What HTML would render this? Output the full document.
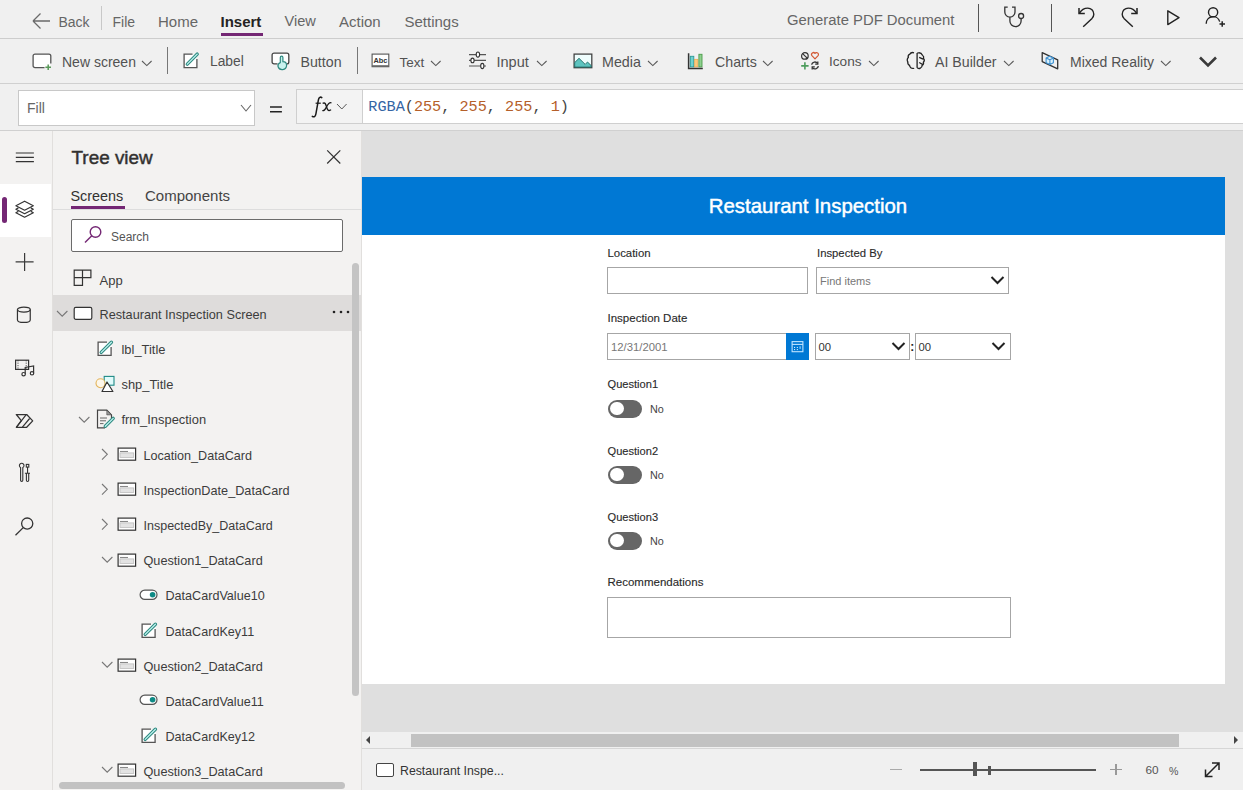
<!DOCTYPE html>
<html><head><meta charset="utf-8"><title>Power Apps</title>
<style>
html,body{margin:0;padding:0;width:1243px;height:792px;overflow:hidden;background:#f0f0f0;}
.t{position:absolute;white-space:pre;line-height:1;font-family:"Liberation Sans",sans-serif;}
.r{position:absolute;}
svg.r{overflow:visible;}
</style></head><body>
<div class="r" style="left:0px;top:0px;width:1243px;height:792px;background:#f0f0f0;"></div>
<div class="r" style="left:0px;top:38px;width:1243px;height:1px;background:#cdcdcd;"></div>
<svg class="r" style="left:30px;top:10px;" width="22" height="22" viewBox="0 0 22 22" fill="none"><path d="M3 11 H20 M3 11 L10.5 3.5 M3 11 L10.5 18.5" stroke="#6a6a6a" stroke-width="1.3"/></svg>
<div class="t" style="left:58.50px;top:14.65px;font-size:14px;color:#666;font-weight:400;font-family:'Liberation Sans', sans-serif;">Back</div>
<div class="r" style="left:101px;top:6px;width:1px;height:24px;background:#c8c8c8;"></div>
<div class="t" style="left:112.50px;top:14.65px;font-size:14px;color:#666;font-weight:400;font-family:'Liberation Sans', sans-serif;">File</div>
<div class="t" style="left:158.00px;top:13.80px;font-size:15px;color:#666;font-weight:400;font-family:'Liberation Sans', sans-serif;">Home</div>
<div class="t" style="left:220.50px;top:13.80px;font-size:15px;color:#252423;font-weight:700;font-family:'Liberation Sans', sans-serif;">Insert</div>
<div class="r" style="left:221px;top:33px;width:42px;height:3px;background:#742774;"></div>
<div class="t" style="left:284.50px;top:14.14px;font-size:14.6px;color:#666;font-weight:400;font-family:'Liberation Sans', sans-serif;">View</div>
<div class="t" style="left:339.00px;top:13.80px;font-size:15px;color:#666;font-weight:400;font-family:'Liberation Sans', sans-serif;">Action</div>
<div class="t" style="left:404.50px;top:13.80px;font-size:15px;color:#666;font-weight:400;font-family:'Liberation Sans', sans-serif;">Settings</div>
<div class="t" style="left:787.00px;top:12.93px;font-size:14.85px;color:#666;font-weight:400;font-family:'Liberation Sans', sans-serif;">Generate PDF Document</div>
<div class="r" style="left:978px;top:4px;width:1px;height:28px;background:#555;"></div>
<div class="r" style="left:1051px;top:4px;width:1px;height:28px;background:#555;"></div>
<div class="r" style="left:0px;top:83px;width:1243px;height:1px;background:#d0d0d0;"></div>
<div class="t" style="left:62.00px;top:55.15px;font-size:14px;color:#525252;font-weight:400;font-family:'Liberation Sans', sans-serif;">New screen</div>
<div class="t" style="left:210.00px;top:55.32px;font-size:13.8px;color:#525252;font-weight:400;font-family:'Liberation Sans', sans-serif;">Label</div>
<div class="t" style="left:300.50px;top:54.98px;font-size:14.2px;color:#525252;font-weight:400;font-family:'Liberation Sans', sans-serif;">Button</div>
<div class="t" style="left:399.50px;top:55.57px;font-size:13.5px;color:#525252;font-weight:400;font-family:'Liberation Sans', sans-serif;">Text</div>
<div class="t" style="left:496.50px;top:54.73px;font-size:14.5px;color:#525252;font-weight:400;font-family:'Liberation Sans', sans-serif;">Input</div>
<div class="t" style="left:602.00px;top:54.90px;font-size:14.3px;color:#525252;font-weight:400;font-family:'Liberation Sans', sans-serif;">Media</div>
<div class="t" style="left:715.00px;top:54.98px;font-size:14.2px;color:#525252;font-weight:400;font-family:'Liberation Sans', sans-serif;">Charts</div>
<div class="t" style="left:829.00px;top:55.49px;font-size:13.6px;color:#525252;font-weight:400;font-family:'Liberation Sans', sans-serif;">Icons</div>
<div class="t" style="left:935.00px;top:54.98px;font-size:14.2px;color:#525252;font-weight:400;font-family:'Liberation Sans', sans-serif;">AI Builder</div>
<div class="t" style="left:1070.00px;top:55.15px;font-size:14px;color:#525252;font-weight:400;font-family:'Liberation Sans', sans-serif;">Mixed Reality</div>
<div class="r" style="left:167px;top:47px;width:1px;height:27px;background:#777;"></div>
<div class="r" style="left:357px;top:47px;width:1px;height:27px;background:#777;"></div>
<svg class="r" style="left:141.3px;top:60.2px;" width="11.6" height="6.6" viewBox="0 0 11.6 6.6" fill="none"><path d="M1 1 L5.8 5.6 L10.6 1" stroke="#5a5a5a" stroke-width="1.05"/></svg>
<svg class="r" style="left:429.7px;top:60.2px;" width="11.6" height="6.6" viewBox="0 0 11.6 6.6" fill="none"><path d="M1 1 L5.8 5.6 L10.6 1" stroke="#5a5a5a" stroke-width="1.05"/></svg>
<svg class="r" style="left:535.8px;top:60.2px;" width="11.6" height="6.6" viewBox="0 0 11.6 6.6" fill="none"><path d="M1 1 L5.8 5.6 L10.6 1" stroke="#5a5a5a" stroke-width="1.05"/></svg>
<svg class="r" style="left:647px;top:60.2px;" width="11.6" height="6.6" viewBox="0 0 11.6 6.6" fill="none"><path d="M1 1 L5.8 5.6 L10.6 1" stroke="#5a5a5a" stroke-width="1.05"/></svg>
<svg class="r" style="left:762.4px;top:60.2px;" width="11.6" height="6.6" viewBox="0 0 11.6 6.6" fill="none"><path d="M1 1 L5.8 5.6 L10.6 1" stroke="#5a5a5a" stroke-width="1.05"/></svg>
<svg class="r" style="left:867.7px;top:60.2px;" width="11.6" height="6.6" viewBox="0 0 11.6 6.6" fill="none"><path d="M1 1 L5.8 5.6 L10.6 1" stroke="#5a5a5a" stroke-width="1.05"/></svg>
<svg class="r" style="left:1002.6px;top:60.2px;" width="11.6" height="6.6" viewBox="0 0 11.6 6.6" fill="none"><path d="M1 1 L5.8 5.6 L10.6 1" stroke="#5a5a5a" stroke-width="1.05"/></svg>
<svg class="r" style="left:1159.7px;top:60.2px;" width="11.6" height="6.6" viewBox="0 0 11.6 6.6" fill="none"><path d="M1 1 L5.8 5.6 L10.6 1" stroke="#5a5a5a" stroke-width="1.05"/></svg>
<svg class="r" style="left:1198px;top:55px;" width="22" height="14" viewBox="0 0 22 14" fill="none"><path d="M2 2.5 L10 10.5 L18 2.5" stroke="#3a3a3a" stroke-width="2.6"/></svg>
<div class="r" style="left:0px;top:130px;width:1243px;height:1px;background:#d0d0d0;"></div>
<div class="r" style="left:18px;top:90px;width:237px;height:36px;background:#ffffff;border:1px solid #c8c8c8;box-sizing:border-box;"></div>
<div class="t" style="left:27.00px;top:101.15px;font-size:14px;color:#666;font-weight:400;font-family:'Liberation Sans', sans-serif;">Fill</div>
<svg class="r" style="left:240px;top:104px;" width="12" height="8" viewBox="0 0 12 8" fill="none"><path d="M1 1 L6.0 7 L11 1" stroke="#666" stroke-width="1.1"/></svg>
<svg class="r" style="left:268px;top:104px;" width="16" height="10" viewBox="0 0 16 10" fill="none"><path d="M2 2.9 H13.9 M2 7.7 H13.9" stroke="#222" stroke-width="1.5"/></svg>
<div class="r" style="left:296px;top:89px;width:67px;height:35px;background:#f3f3f3;border:1px solid #cfcfcf;box-sizing:border-box;"></div>
<div class="r" style="left:362px;top:89px;width:881px;height:35px;background:#ffffff;border:1px solid #cfcfcf;box-sizing:border-box;border-right:none;"></div>
<svg class="r" style="left:310px;top:94px;" width="24" height="25" viewBox="0 0 24 25" fill="none"><path d="M11.8 3.6 C10.6 2.6 8.9 3.2 8.4 5.8 L5.9 19.8 C5.4 22.6 3.9 23.4 2.3 22.4" stroke="#1a1a1a" stroke-width="1.5" stroke-linecap="round"/><path d="M5.6 9.2 H10.8" stroke="#1a1a1a" stroke-width="1.2"/><path d="M13.2 9.2 C15 8.4 15.6 9.6 16.4 12.4 C17.2 15.4 18 17.4 20.6 16" stroke="#1a1a1a" stroke-width="1.4" stroke-linecap="round"/><path d="M21 8.8 C19.4 8.2 17.8 10.6 16.6 12.8 C15.4 15 14.4 17 12.8 16.6" stroke="#1a1a1a" stroke-width="1.3" stroke-linecap="round"/></svg>
<svg class="r" style="left:336px;top:103.3px;" width="11.6" height="7" viewBox="0 0 11.6 7" fill="none"><path d="M1 1 L5.8 6 L10.6 1" stroke="#555" stroke-width="1.0"/></svg>
<div class="t" style="left:368.30px;top:100.43px;font-size:15.2px;color:#444;font-weight:400;font-family:'Liberation Mono', monospace;"><span style="color:#3465a4">RGBA</span><span style="color:#444">(</span><span style="color:#b5602a">255</span><span style="color:#444">, </span><span style="color:#b5602a">255</span><span style="color:#444">, </span><span style="color:#b5602a">255</span><span style="color:#444">, </span><span style="color:#b5602a">1</span><span style="color:#444">)</span></div>
<div class="r" style="left:0px;top:131px;width:52px;height:661px;background:#f3f2f1;"></div>
<div class="r" style="left:52px;top:131px;width:1px;height:661px;background:#e1dfdd;"></div>
<div class="r" style="left:0px;top:184px;width:51px;height:53px;background:#ffffff;"></div>
<div class="r" style="left:2px;top:197px;width:5px;height:26px;background:#742774;border-radius:3px;"></div>
<div class="r" style="left:53px;top:131px;width:308px;height:661px;background:#f3f2f1;"></div>
<div class="r" style="left:361px;top:131px;width:1px;height:661px;background:#e1dfdd;"></div>
<div class="t" style="left:71.50px;top:149.00px;font-size:18.9px;color:#323130;font-weight:400;font-family:'Liberation Sans', sans-serif;-webkit-text-stroke:0.45px #323130;">Tree view</div>
<svg class="r" style="left:326px;top:149px;" width="16" height="16" viewBox="0 0 16 16" fill="none"><path d="M1.2 1.4 L14.3 14.5 M14.3 1.4 L1.2 14.5" stroke="#333" stroke-width="1.2"/></svg>
<div class="t" style="left:70.50px;top:188.81px;font-size:14.4px;color:#323130;font-weight:400;font-family:'Liberation Sans', sans-serif;">Screens</div>
<div class="r" style="left:71px;top:206px;width:54px;height:3px;background:#742774;"></div>
<div class="t" style="left:145.00px;top:188.30px;font-size:15px;color:#444;font-weight:400;font-family:'Liberation Sans', sans-serif;">Components</div>
<div class="r" style="left:53px;top:209px;width:308px;height:1px;background:#dddddd;"></div>
<div class="r" style="left:71px;top:219px;width:272px;height:33px;background:#ffffff;border:1px solid #6b6b6b;box-sizing:border-box;border-radius:2px;"></div>
<svg class="r" style="left:83px;top:224px;" width="22" height="22" viewBox="0 0 22 22" fill="none"><circle cx="12.5" cy="8" r="5.3" stroke="#742774" stroke-width="1.4"/><path d="M8.8 11.8 L2 18.6" stroke="#742774" stroke-width="1.4"/></svg>
<div class="t" style="left:111.00px;top:231.34px;font-size:12px;color:#555;font-weight:400;font-family:'Liberation Sans', sans-serif;">Search</div>
<div class="r" style="left:53px;top:295px;width:308px;height:36px;background:#dedcdb;"></div>
<div class="t" style="left:99.50px;top:273.80px;font-size:13px;color:#3c3c3c;font-weight:400;font-family:'Liberation Sans', sans-serif;">App</div>
<div class="t" style="left:99.50px;top:309.19px;font-size:12.7px;color:#3c3c3c;font-weight:400;font-family:'Liberation Sans', sans-serif;">Restaurant Inspection Screen</div>
<div class="t" style="left:121.50px;top:344.16px;font-size:12.9px;color:#3c3c3c;font-weight:400;font-family:'Liberation Sans', sans-serif;">lbl_Title</div>
<div class="t" style="left:121.50px;top:379.30px;font-size:12.9px;color:#3c3c3c;font-weight:400;font-family:'Liberation Sans', sans-serif;">shp_Title</div>
<div class="t" style="left:121.50px;top:414.44px;font-size:12.9px;color:#3c3c3c;font-weight:400;font-family:'Liberation Sans', sans-serif;">frm_Inspection</div>
<div class="t" style="left:143.50px;top:449.83px;font-size:12.6px;color:#3c3c3c;font-weight:400;font-family:'Liberation Sans', sans-serif;">Location_DataCard</div>
<div class="t" style="left:143.50px;top:484.89px;font-size:12.7px;color:#3c3c3c;font-weight:400;font-family:'Liberation Sans', sans-serif;">InspectionDate_DataCard</div>
<div class="t" style="left:143.50px;top:520.20px;font-size:12.5px;color:#3c3c3c;font-weight:400;font-family:'Liberation Sans', sans-serif;">InspectedBy_DataCard</div>
<div class="t" style="left:143.50px;top:555.17px;font-size:12.7px;color:#3c3c3c;font-weight:400;font-family:'Liberation Sans', sans-serif;">Question1_DataCard</div>
<div class="t" style="left:165.50px;top:590.39px;font-size:12.6px;color:#3c3c3c;font-weight:400;font-family:'Liberation Sans', sans-serif;">DataCardValue10</div>
<div class="t" style="left:165.50px;top:625.53px;font-size:12.6px;color:#3c3c3c;font-weight:400;font-family:'Liberation Sans', sans-serif;">DataCardKey11</div>
<div class="t" style="left:143.50px;top:660.59px;font-size:12.7px;color:#3c3c3c;font-weight:400;font-family:'Liberation Sans', sans-serif;">Question2_DataCard</div>
<div class="t" style="left:165.50px;top:695.81px;font-size:12.6px;color:#3c3c3c;font-weight:400;font-family:'Liberation Sans', sans-serif;">DataCardValue11</div>
<div class="t" style="left:165.50px;top:730.95px;font-size:12.6px;color:#3c3c3c;font-weight:400;font-family:'Liberation Sans', sans-serif;">DataCardKey12</div>
<div class="t" style="left:143.50px;top:766.01px;font-size:12.7px;color:#3c3c3c;font-weight:400;font-family:'Liberation Sans', sans-serif;">Question3_DataCard</div>
<div class="r" style="left:352px;top:263px;width:7px;height:433px;background:#c4c4c4;border-radius:3.5px;"></div>
<div class="r" style="left:59px;top:782px;width:286px;height:7px;background:#c2c2c2;border-radius:3.5px;"></div>
<div class="r" style="left:362px;top:131px;width:881px;height:601px;background:#dfdfdf;"></div>
<div class="r" style="left:362px;top:177px;width:863px;height:507px;background:#ffffff;"></div>
<div class="r" style="left:362px;top:177px;width:863px;height:58px;background:#0078d4;"></div>
<div class="t" style="left:708.80px;top:196.33px;font-size:20.4px;color:#ffffff;font-weight:400;font-family:'Liberation Sans', sans-serif;-webkit-text-stroke:0.45px #fff;">Restaurant Inspection</div>
<div class="t" style="left:607.50px;top:247.55px;font-size:11.4px;color:#2a2a2a;font-weight:400;font-family:'Liberation Sans', sans-serif;-webkit-text-stroke:0.12px #2a2a2a;">Location</div>
<div class="t" style="left:817.00px;top:247.63px;font-size:11.3px;color:#2a2a2a;font-weight:400;font-family:'Liberation Sans', sans-serif;-webkit-text-stroke:0.12px #2a2a2a;">Inspected By</div>
<div class="r" style="left:607px;top:267px;width:201px;height:27px;background:#fff;border:1px solid #a6a6a6;box-sizing:border-box;"></div>
<div class="r" style="left:816px;top:267px;width:193px;height:27px;background:#fff;border:1px solid #a6a6a6;box-sizing:border-box;"></div>
<div class="t" style="left:820.00px;top:276.39px;font-size:11px;color:#777;font-weight:400;font-family:'Liberation Sans', sans-serif;">Find items</div>
<svg class="r" style="left:989px;top:275px;" width="18" height="11" viewBox="0 0 18 11" fill="none"><path d="M2.5 2 L8.5 8 L14.5 2" stroke="#222" stroke-width="2"/></svg>
<div class="t" style="left:607.50px;top:313.27px;font-size:11.5px;color:#2a2a2a;font-weight:400;font-family:'Liberation Sans', sans-serif;-webkit-text-stroke:0.12px #2a2a2a;">Inspection Date</div>
<div class="r" style="left:607px;top:333px;width:202px;height:27px;background:#fff;border:1px solid #a6a6a6;box-sizing:border-box;"></div>
<div class="r" style="left:786px;top:333px;width:23px;height:27px;background:#0078d4;"></div>
<svg class="r" style="left:790px;top:340px;" width="15" height="14" viewBox="0 0 15 14" fill="none"><rect x="2.1" y="1.6" width="10.8" height="10.1" stroke="#bfe3ff" stroke-width="1.1"/><path d="M2.1 4.4 H12.9" stroke="#bfe3ff" stroke-width="1.1"/><rect x="4" y="6.9" width="1.1" height="1.1" fill="#cfeaff"/><rect x="6.8" y="6.9" width="1.1" height="1.1" fill="#cfeaff"/><rect x="4" y="9" width="1.1" height="1.1" fill="#cfeaff"/><rect x="6.8" y="9" width="1.1" height="1.1" fill="#cfeaff"/><rect x="9.4" y="6.3" width="1.4" height="2.6" fill="#7fc4f5"/></svg>
<div class="t" style="left:611.00px;top:342.43px;font-size:11.3px;color:#777;font-weight:400;font-family:'Liberation Sans', sans-serif;">12/31/2001</div>
<div class="r" style="left:815px;top:333px;width:94.5px;height:27px;background:#fff;border:1px solid #a6a6a6;box-sizing:border-box;"></div>
<div class="r" style="left:915px;top:333px;width:96px;height:27px;background:#fff;border:1px solid #a6a6a6;box-sizing:border-box;"></div>
<div class="t" style="left:818.50px;top:342.43px;font-size:11.3px;color:#333;font-weight:400;font-family:'Liberation Sans', sans-serif;">00</div>
<div class="t" style="left:918.50px;top:342.43px;font-size:11.3px;color:#333;font-weight:400;font-family:'Liberation Sans', sans-serif;">00</div>
<div class="t" style="left:910.30px;top:341.34px;font-size:12px;color:#222;font-weight:700;font-family:'Liberation Sans', sans-serif;">:</div>
<svg class="r" style="left:890px;top:341px;" width="18" height="11" viewBox="0 0 18 11" fill="none"><path d="M2.5 2 L8.5 8 L14.5 2" stroke="#222" stroke-width="2"/></svg>
<svg class="r" style="left:990px;top:341px;" width="18" height="11" viewBox="0 0 18 11" fill="none"><path d="M2.5 2 L8.5 8 L14.5 2" stroke="#222" stroke-width="2"/></svg>
<div class="t" style="left:607.50px;top:379.40px;font-size:11.1px;color:#2a2a2a;font-weight:400;font-family:'Liberation Sans', sans-serif;-webkit-text-stroke:0.12px #2a2a2a;">Question1</div>
<div class="r" style="left:608px;top:399.5px;width:34px;height:18px;background:#666666;border-radius:9px;"></div>
<div class="r" style="left:610px;top:401.7px;width:13.6px;height:13.6px;border-radius:50%;background:#fff"></div>
<div class="t" style="left:650.00px;top:403.66px;font-size:10.8px;color:#444;font-weight:400;font-family:'Liberation Sans', sans-serif;">No</div>
<div class="t" style="left:607.50px;top:445.60px;font-size:11.1px;color:#2a2a2a;font-weight:400;font-family:'Liberation Sans', sans-serif;-webkit-text-stroke:0.12px #2a2a2a;">Question2</div>
<div class="r" style="left:608px;top:465.5px;width:34px;height:18px;background:#666666;border-radius:9px;"></div>
<div class="r" style="left:610px;top:467.7px;width:13.6px;height:13.6px;border-radius:50%;background:#fff"></div>
<div class="t" style="left:650.00px;top:469.66px;font-size:10.8px;color:#444;font-weight:400;font-family:'Liberation Sans', sans-serif;">No</div>
<div class="t" style="left:607.50px;top:511.60px;font-size:11.1px;color:#2a2a2a;font-weight:400;font-family:'Liberation Sans', sans-serif;-webkit-text-stroke:0.12px #2a2a2a;">Question3</div>
<div class="r" style="left:608px;top:531.5px;width:34px;height:18px;background:#666666;border-radius:9px;"></div>
<div class="r" style="left:610px;top:533.7px;width:13.6px;height:13.6px;border-radius:50%;background:#fff"></div>
<div class="t" style="left:650.00px;top:535.66px;font-size:10.8px;color:#444;font-weight:400;font-family:'Liberation Sans', sans-serif;">No</div>
<div class="t" style="left:607.50px;top:577.07px;font-size:11.5px;color:#2a2a2a;font-weight:400;font-family:'Liberation Sans', sans-serif;-webkit-text-stroke:0.12px #2a2a2a;">Recommendations</div>
<div class="r" style="left:607px;top:597px;width:403.5px;height:41px;background:#fff;border:1px solid #a6a6a6;box-sizing:border-box;"></div>
<div class="r" style="left:362px;top:732px;width:881px;height:16px;background:#f0f0f0;"></div>
<div class="r" style="left:411px;top:734px;width:768px;height:13px;background:#c2c2c2;"></div>
<svg class="r" style="left:364px;top:735px;" width="8" height="10" viewBox="0 0 8 10" fill="none"><path d="M6 1 L2 5 L6 9 Z" fill="#444"/></svg>
<svg class="r" style="left:1232px;top:735px;" width="8" height="10" viewBox="0 0 8 10" fill="none"><path d="M2 1 L6 5 L2 9 Z" fill="#444"/></svg>
<div class="r" style="left:362px;top:748px;width:881px;height:1px;background:#d6d6d6;"></div>
<div class="r" style="left:362px;top:749px;width:881px;height:41px;background:#f0f0f0;"></div>
<div class="r" style="left:0px;top:790px;width:1243px;height:2px;background:#ffffff;"></div>
<div class="r" style="left:376px;top:763px;width:18px;height:14px;background:#fff;border:1.2px solid #444;box-sizing:border-box;border-radius:2px;"></div>
<div class="t" style="left:400.00px;top:764.59px;font-size:12.3px;color:#333;font-weight:400;font-family:'Liberation Sans', sans-serif;">Restaurant Inspe...</div>
<div class="r" style="left:890px;top:769px;width:12px;height:1.3px;background:#aaa;"></div>
<div class="r" style="left:920px;top:769px;width:176px;height:2px;background:#555;"></div>
<div class="r" style="left:973px;top:761.5px;width:4px;height:14px;background:#555;"></div>
<div class="r" style="left:988px;top:766px;width:3px;height:9px;background:#555;"></div>
<div class="r" style="left:1110px;top:769px;width:12px;height:1.3px;background:#999;"></div>
<div class="r" style="left:1115.3px;top:764px;width:1.3px;height:11px;background:#999;"></div>
<div class="t" style="left:1145.50px;top:765.01px;font-size:11.8px;color:#555;font-weight:400;font-family:'Liberation Sans', sans-serif;">60</div>
<div class="t" style="left:1169.00px;top:766.03px;font-size:10.6px;color:#555;font-weight:400;font-family:'Liberation Sans', sans-serif;">%</div>
<svg class="r" style="left:1203px;top:761px;" width="19" height="18" viewBox="0 0 19 18" fill="none"><path d="M2.5 15.5 L16 2 M9 2 H16 V9 M2.5 8.5 V15.5 H9.5" stroke="#222" stroke-width="1.5"/></svg>
<svg class="r" style="left:1002px;top:5px;" width="24" height="24" viewBox="0 0 24 24" fill="none"><path d="M5.7 2.1 H2.8 V7 A5.1 5.1 0 0 0 13 7 V2.1 H10" stroke="#333" stroke-width="1.3"/><path d="M7.9 12.2 V16 A5.6 5.6 0 0 0 19.1 16 V13.6" stroke="#333" stroke-width="1.3"/><circle cx="19.1" cy="11" r="2.5" stroke="#333" stroke-width="1.3"/></svg>
<svg class="r" style="left:1076px;top:5px;" width="21" height="24" viewBox="0 0 21 24" fill="none"><path d="M3 3.1 V8.6 H8.8" stroke="#222" stroke-width="1.5"/><path d="M3.5 8.2 C5.5 4.6 8.8 3.1 11.8 3.1 C15 3.1 17.8 5.7 17.8 9.3 C17.8 11 17 12.3 16 13.4 L7.2 21.8" stroke="#222" stroke-width="1.4"/></svg>
<svg class="r" style="left:1119px;top:5px;" width="21" height="24" viewBox="0 0 21 24" fill="none"><g transform="translate(21,0) scale(-1,1)"><path d="M3 3.1 V8.6 H8.8" stroke="#222" stroke-width="1.5"/><path d="M3.5 8.2 C5.5 4.6 8.8 3.1 11.8 3.1 C15 3.1 17.8 5.7 17.8 9.3 C17.8 11 17 12.3 16 13.4 L7.2 21.8" stroke="#222" stroke-width="1.4"/></g></svg>
<svg class="r" style="left:1165px;top:7px;" width="18" height="22" viewBox="0 0 18 22" fill="none"><path d="M2.8 3.8 V17.6 L14 10.7 Z" stroke="#222" stroke-width="1.4" stroke-linejoin="round"/></svg>
<svg class="r" style="left:1204px;top:6px;" width="24" height="24" viewBox="0 0 24 24" fill="none"><circle cx="9.1" cy="6.3" r="4.6" stroke="#222" stroke-width="1.4"/><path d="M2.2 17.7 A6.9 6.9 0 0 1 15.7 15.6" stroke="#222" stroke-width="1.4"/><path d="M15.5 18 H21 M18.2 15.3 V20.7" stroke="#222" stroke-width="1.5"/></svg>
<svg class="r" style="left:32px;top:53px;" width="22" height="18" viewBox="0 0 22 18" fill="none"><rect x="1.6" y="1.6" width="16.7" height="12.6" rx="1.6" fill="#fff"/><path d="M12.5 14.6 H3 A1.9 1.9 0 0 1 1.1 12.7 V3 A1.9 1.9 0 0 1 3 1.1 H16.9 A1.9 1.9 0 0 1 18.8 3 V10.5" stroke="#555" stroke-width="1.3"/><path d="M13.4 14.2 H19 M16.2 11.4 V17" stroke="#5a9a5a" stroke-width="1.5"/></svg>
<svg class="r" style="left:183px;top:52px;" width="18" height="18" viewBox="0 0 18 18" fill="none"><rect x="1.6" y="2.6" width="11.8" height="12.6" fill="#fff"/><path d="M9.5 2.1 H1.1 V15.7 H13.9 V7" stroke="#555" stroke-width="1.3"/><path d="M4.3 12.1 L14.2 2.1" stroke="#2f8a80" stroke-width="3.4" stroke-linecap="round"/><path d="M4.3 12.1 L14.2 2.1" stroke="#bff3f0" stroke-width="1.3" stroke-linecap="round"/></svg>
<svg class="r" style="left:271px;top:52px;" width="20" height="20" viewBox="0 0 20 20" fill="none"><rect x="1.6" y="1.6" width="16.2" height="10" rx="1" fill="#fff"/><path d="M6.5 11.8 H3 A1.9 1.9 0 0 1 1.1 9.9 V3 A1.9 1.9 0 0 1 3 1.1 H15.9 A1.9 1.9 0 0 1 17.8 3 V9.9 A1.9 1.9 0 0 1 15.9 11.8" stroke="#444" stroke-width="1.3"/><path d="M9.3 10.6 V5.5 A1.3 1.3 0 0 1 11.9 5.5 V9.6 C14.6 9.6 15.6 11 15.6 13.4 A4.4 4.4 0 0 1 7 14.5 C6.8 13.2 7.5 11.2 9.3 10.6 Z" fill="#c9f2ee" stroke="#2f8a80" stroke-width="1.2"/></svg>
<svg class="r" style="left:371px;top:53px;" width="20" height="16" viewBox="0 0 20 16" fill="none"><rect x="1.1" y="1.1" width="16.7" height="12.6" fill="#fff" stroke="#555" stroke-width="1.1"/><path d="M1.1 13 H17.8" stroke="#666" stroke-width="1.6"/><text x="9.45" y="10.2" font-family="Liberation Sans" font-size="7.4" font-weight="700" fill="#333" text-anchor="middle">Abc</text></svg>
<svg class="r" style="left:468px;top:51px;" width="20" height="19" viewBox="0 0 20 19" fill="none"><path d="M1 3.6 H18 M1 9.4 H18 M1 15 H18" stroke="#555" stroke-width="1.2"/><ellipse cx="9.9" cy="3.6" rx="1.7" ry="2.6" fill="#fff" stroke="#333" stroke-width="1.1"/><ellipse cx="4.5" cy="9.4" rx="1.6" ry="2.3" fill="#fff" stroke="#333" stroke-width="1.1"/><ellipse cx="14.3" cy="15" rx="1.6" ry="2.6" fill="#fff" stroke="#333" stroke-width="1.1"/></svg>
<svg class="r" style="left:573px;top:53px;" width="20" height="16" viewBox="0 0 20 16" fill="none"><rect x="1.1" y="1.1" width="17.7" height="13.6" fill="#effdfd" stroke="#444" stroke-width="1.3"/><path d="M1.7 9.6 L6 5.3 L12.2 11.4 L14.5 9 L18.2 12.6 V14.1 H1.7 Z" fill="#5ec4c0" stroke="#1f6b66" stroke-width="0.9"/></svg>
<svg class="r" style="left:687px;top:52px;" width="18" height="18" viewBox="0 0 18 18" fill="none"><rect x="3.3" y="4.3" width="3.5" height="10.6" fill="#6fd0d0" stroke="#2c9a96" stroke-width="0.9"/><rect x="7.6" y="7.3" width="3.3" height="7.6" fill="#fbc77a" stroke="#e8a850" stroke-width="0.7"/><rect x="11.9" y="2.3" width="3.1" height="12.6" fill="#8fd08f" stroke="#4b9c4b" stroke-width="0.9"/><path d="M1.6 1.3 V16.5 H15.8" stroke="#333" stroke-width="1.5"/></svg>
<svg class="r" style="left:799px;top:51px;" width="22" height="22" viewBox="0 0 22 22" fill="none"><circle cx="5.9" cy="4.9" r="3.3" stroke="#333" stroke-width="1.2"/><path d="M3.6 2.6 L8.2 7.2" stroke="#333" stroke-width="1.2"/><path d="M16 7.9 L12.9 4.6 A1.9 1.9 0 0 1 16 2.4 A1.9 1.9 0 0 1 19.1 4.6 Z" stroke="#d35a35" stroke-width="1.2" stroke-linejoin="round"/><path d="M2.2 14.9 H9.6 M5.9 11.2 V18.6" stroke="#4c9c5c" stroke-width="1.6"/><path d="M12.6 13.6 A3.4 3.4 0 0 1 18.6 12.4 M19.4 15.2 A3.4 3.4 0 0 1 13.4 16.6" stroke="#333" stroke-width="1.4"/><path d="M18.8 10.5 V13.2 H16.2 M13.2 18.4 V15.8 H15.8" stroke="#333" stroke-width="1.3"/></svg>
<svg class="r" style="left:906px;top:51px;" width="20" height="20" viewBox="0 0 20 20" fill="none"><path d="M8 1.8 C6.5 1.2 4.5 1.9 3.6 3.3 C2.3 3.8 2 5.3 2.3 6.5 C1.1 7.4 0.9 9.7 1.8 10.9 C1.6 12.4 2.4 13.8 3.5 14.3 C3.7 16.3 5.4 17.6 7.4 17.3 C7.7 17.4 7.9 17.3 8.1 17.1" stroke="#222" stroke-width="1.3"/><path d="M11.1 2 V16.4 C11.5 17.6 13.2 17.8 14.3 17.1 C15.5 16.7 16.2 15.6 16.1 14.4 C17.3 13.7 17.8 12.5 17.4 11.2 C18.4 10.2 18.4 8.5 17.5 7.5 C17.9 6.2 17.5 4.8 16.5 4.2 C15.8 2.7 14.1 1.6 12.4 1.8 C11.8 1.8 11.4 1.9 11.1 2 M13.2 6.4 L17 8.2 M13.2 11.5 L16.7 13.5" stroke="#222" stroke-width="1.3"/></svg>
<svg class="r" style="left:1041px;top:51px;" width="20" height="20" viewBox="0 0 20 20" fill="none"><path d="M1.2 1.6 L16.7 8.8 V17.8 L1.2 10.6 Z" stroke="#333" stroke-width="1.3" stroke-linejoin="round"/><path d="M5.1 7 L8.5 5.2 L12.4 7 V11.8 L8.9 13.6 L5.1 11.8 Z M5.1 7 L8.9 8.8 L12.4 7 M8.9 8.8 V13.6" fill="#d8f0fb" stroke="#3d8fcf" stroke-width="1.1" stroke-linejoin="round"/></svg>
<svg class="r" style="left:15px;top:152px;" width="20" height="11" viewBox="0 0 20 11" fill="none"><path d="M0.8 1 H18.9 M0.8 5.3 H18.9 M0.8 9.6 H18.9" stroke="#333" stroke-width="1.2"/></svg>
<svg class="r" style="left:15px;top:200px;" width="20" height="18" viewBox="0 0 20 18" fill="none"><path d="M9.6 1.2 L18.3 5.7 L9.6 10.2 L0.9 5.7 Z" fill="#fff" stroke="#333" stroke-width="1.2" stroke-linejoin="round"/><path d="M3.4 7.9 L0.9 9.2 L9.6 13.7 L18.3 9.2 L15.8 7.9" stroke="#333" stroke-width="1.2" stroke-linejoin="round"/><path d="M3.4 11.4 L0.9 12.7 L9.6 17.2 L18.3 12.7 L15.8 11.4" stroke="#333" stroke-width="1.2" stroke-linejoin="round"/></svg>
<svg class="r" style="left:15px;top:252px;" width="20" height="20" viewBox="0 0 20 20" fill="none"><path d="M0.6 9.9 H18.6 M9.6 0.9 V18.9" stroke="#3a3a3a" stroke-width="1.2"/></svg>
<svg class="r" style="left:16px;top:306px;" width="16" height="18" viewBox="0 0 16 18" fill="none"><ellipse cx="7.85" cy="3.6" rx="6.4" ry="2.5" stroke="#333" stroke-width="1.2"/><path d="M1.45 3.6 V13.9 C1.45 15.3 4.3 16.4 7.85 16.4 C11.4 16.4 14.25 15.3 14.25 13.9 V3.6" stroke="#333" stroke-width="1.2"/></svg>
<svg class="r" style="left:14px;top:359px;" width="22" height="18" viewBox="0 0 22 18" fill="none"><rect x="1.6" y="1.2" width="13" height="9.2" stroke="#333" stroke-width="1.2"/><path d="M4 1.2 V10.4 M12.2 1.2 V10.4" stroke="#333" stroke-width="0.8" stroke-dasharray="1.2 1.2"/><path d="M11.2 15.4 V8.5 L19.6 7 V14.3" stroke="#333" stroke-width="1.2"/><circle cx="9.6" cy="15.2" r="1.7" fill="#fff" stroke="#333" stroke-width="1.2"/><circle cx="18" cy="14.3" r="1.7" fill="#fff" stroke="#333" stroke-width="1.2"/></svg>
<svg class="r" style="left:15px;top:413px;" width="20" height="17" viewBox="0 0 20 17" fill="none"><path d="M1.3 1.5 H11.7 L17.7 7.9 L11.7 14.3 H1.3 L6.3 7.7 Z" stroke="#333" stroke-width="1.25" stroke-linejoin="round"/><path d="M11.2 1.6 L1.5 14.2 M14.6 5.5 L7.4 14.2" stroke="#333" stroke-width="1.2"/></svg>
<svg class="r" style="left:18px;top:462px;" width="14" height="21" viewBox="0 0 14 21" fill="none"><path d="M2.6 5.6 A2.3 2.3 0 1 1 4.8 5.6 V18.3 A1.1 1.1 0 0 1 2.6 18.3 Z" stroke="#333" stroke-width="1.1" stroke-linejoin="round"/><rect x="8.3" y="2.4" width="2.5" height="2.7" stroke="#333" stroke-width="1.1"/><path d="M9.55 5.1 V11.3 M6.9 11.3 H12 M8.4 11.3 V18.3 A1.15 1.15 0 0 0 10.7 18.3 V11.3" stroke="#333" stroke-width="1.1"/></svg>
<svg class="r" style="left:14px;top:516px;" width="22" height="21" viewBox="0 0 22 21" fill="none"><circle cx="13.2" cy="7.6" r="5.6" stroke="#333" stroke-width="1.3"/><path d="M9.2 11.6 L1.5 19.3" stroke="#333" stroke-width="1.3"/></svg>
<svg class="r" style="left:73px;top:269px;" width="19" height="18" viewBox="0 0 19 18" fill="none"><path d="M1.2 1.2 H17.9 V8.7 H9.5 V16.3 H1.2 Z M9.5 1.2 V8.7 H1.2" stroke="#333" stroke-width="1.2"/></svg>
<svg class="r" style="left:56px;top:310px;" width="14" height="9" viewBox="0 0 14 9" fill="none"><path d="M1 1 L6.2 6.2 L11.4 1" stroke="#777" stroke-width="1.1"/></svg>
<svg class="r" style="left:73px;top:306px;" width="20" height="15" viewBox="0 0 20 15" fill="none"><rect x="1.2" y="1.3" width="17.6" height="12" rx="1.6" fill="#fff" stroke="#333" stroke-width="1.2"/></svg>
<svg class="r" style="left:331px;top:309px;" width="22" height="6" viewBox="0 0 22 6" fill="none"><circle cx="3" cy="3" r="1.3" fill="#222"/><circle cx="10" cy="3" r="1.3" fill="#222"/><circle cx="17" cy="3" r="1.3" fill="#222"/></svg>
<svg class="r" style="left:97px;top:341px;" width="18" height="17" viewBox="0 0 18 17" fill="none"><rect x="1.6" y="1.6" width="13" height="12.4" fill="#fff"/><path d="M10 1.1 H1.1 V14.4 H14.1 V6" stroke="#555" stroke-width="1.3"/><path d="M4.2 11.4 L14.4 1.3" stroke="#2f8a80" stroke-width="3.4" stroke-linecap="round"/><path d="M4.2 11.4 L14.4 1.3" stroke="#bff3f0" stroke-width="1.3" stroke-linecap="round"/></svg>
<svg class="r" style="left:94px;top:374px;" width="22" height="20" viewBox="0 0 22 20" fill="none"><rect x="10.2" y="2.4" width="9.8" height="8.8" fill="#e0fbfb" stroke="#1f8a86" stroke-width="1.1"/><circle cx="6.5" cy="9.3" r="4.5" fill="#fdf7ea" stroke="#e3b45a" stroke-width="1.1"/><path d="M13 8 L18.9 17.5 H8 Z" fill="#fff" stroke="#333" stroke-width="1.2" stroke-linejoin="round"/></svg>
<svg class="r" style="left:78px;top:416px;" width="14" height="9" viewBox="0 0 14 9" fill="none"><path d="M1 1 L6.2 6.2 L11.4 1" stroke="#777" stroke-width="1.1"/></svg>
<svg class="r" style="left:96px;top:409px;" width="20" height="20" viewBox="0 0 20 20" fill="none"><path d="M9 18.8 H1.5 V1.2 H10.8 L15.5 5.9 V10" stroke="#444" stroke-width="1.2"/><path d="M10.8 1.2 V5.9 H15.5 Z" fill="#999" stroke="#444" stroke-width="0.6"/><path d="M4 9 H11 M4 11.8 H10 M4 14.6 H7.5" stroke="#666" stroke-width="1"/><path d="M9.3 17.3 L17.2 9.4" stroke="#2f8a80" stroke-width="3.4" stroke-linecap="round"/><path d="M9.3 17.3 L17.2 9.4" stroke="#bff3f0" stroke-width="1.3" stroke-linecap="round"/></svg>
<svg class="r" style="left:101px;top:447.7px;" width="9" height="14" viewBox="0 0 9 14" fill="none"><path d="M1 1 L6.3 6.3 L1 11.6" stroke="#777" stroke-width="1.1"/></svg>
<svg class="r" style="left:117.1px;top:447.2px;" width="20" height="15" viewBox="0 0 20 15" fill="none"><rect x="1.1" y="1.1" width="17.5" height="12.1" fill="#fff" stroke="#333" stroke-width="1.2"/><path d="M3 4.5 H11" stroke="#888" stroke-width="1.1"/><rect x="3" y="5.9" width="13.7" height="4.5" fill="#e3e3e3" stroke="#bdbdbd" stroke-width="0.8"/></svg>
<svg class="r" style="left:101px;top:482.84000000000003px;" width="9" height="14" viewBox="0 0 9 14" fill="none"><path d="M1 1 L6.3 6.3 L1 11.6" stroke="#777" stroke-width="1.1"/></svg>
<svg class="r" style="left:117.1px;top:482.34000000000003px;" width="20" height="15" viewBox="0 0 20 15" fill="none"><rect x="1.1" y="1.1" width="17.5" height="12.1" fill="#fff" stroke="#333" stroke-width="1.2"/><path d="M3 4.5 H11" stroke="#888" stroke-width="1.1"/><rect x="3" y="5.9" width="13.7" height="4.5" fill="#e3e3e3" stroke="#bdbdbd" stroke-width="0.8"/></svg>
<svg class="r" style="left:101px;top:517.98px;" width="9" height="14" viewBox="0 0 9 14" fill="none"><path d="M1 1 L6.3 6.3 L1 11.6" stroke="#777" stroke-width="1.1"/></svg>
<svg class="r" style="left:117.1px;top:517.48px;" width="20" height="15" viewBox="0 0 20 15" fill="none"><rect x="1.1" y="1.1" width="17.5" height="12.1" fill="#fff" stroke="#333" stroke-width="1.2"/><path d="M3 4.5 H11" stroke="#888" stroke-width="1.1"/><rect x="3" y="5.9" width="13.7" height="4.5" fill="#e3e3e3" stroke="#bdbdbd" stroke-width="0.8"/></svg>
<svg class="r" style="left:100.9px;top:555.62px;" width="14" height="9" viewBox="0 0 14 9" fill="none"><path d="M1 1 L6.2 6.2 L11.4 1" stroke="#777" stroke-width="1.1"/></svg>
<svg class="r" style="left:117.1px;top:552.62px;" width="20" height="15" viewBox="0 0 20 15" fill="none"><rect x="1.1" y="1.1" width="17.5" height="12.1" fill="#fff" stroke="#333" stroke-width="1.2"/><path d="M3 4.5 H11" stroke="#888" stroke-width="1.1"/><rect x="3" y="5.9" width="13.7" height="4.5" fill="#e3e3e3" stroke="#bdbdbd" stroke-width="0.8"/></svg>
<svg class="r" style="left:100.9px;top:661.0400000000001px;" width="14" height="9" viewBox="0 0 14 9" fill="none"><path d="M1 1 L6.2 6.2 L11.4 1" stroke="#777" stroke-width="1.1"/></svg>
<svg class="r" style="left:117.1px;top:658.0400000000001px;" width="20" height="15" viewBox="0 0 20 15" fill="none"><rect x="1.1" y="1.1" width="17.5" height="12.1" fill="#fff" stroke="#333" stroke-width="1.2"/><path d="M3 4.5 H11" stroke="#888" stroke-width="1.1"/><rect x="3" y="5.9" width="13.7" height="4.5" fill="#e3e3e3" stroke="#bdbdbd" stroke-width="0.8"/></svg>
<svg class="r" style="left:100.9px;top:766.46px;" width="14" height="9" viewBox="0 0 14 9" fill="none"><path d="M1 1 L6.2 6.2 L11.4 1" stroke="#777" stroke-width="1.1"/></svg>
<svg class="r" style="left:117.1px;top:763.46px;" width="20" height="15" viewBox="0 0 20 15" fill="none"><rect x="1.1" y="1.1" width="17.5" height="12.1" fill="#fff" stroke="#333" stroke-width="1.2"/><path d="M3 4.5 H11" stroke="#888" stroke-width="1.1"/><rect x="3" y="5.9" width="13.7" height="4.5" fill="#e3e3e3" stroke="#bdbdbd" stroke-width="0.8"/></svg>
<svg class="r" style="left:139.3px;top:588.86px;" width="20" height="12" viewBox="0 0 20 12" fill="none"><rect x="1.1" y="1.1" width="16.9" height="9.3" rx="4.65" fill="#fff" stroke="#555" stroke-width="1.2"/><circle cx="13.6" cy="5.75" r="2.8" fill="#0e8a85"/></svg>
<svg class="r" style="left:139.3px;top:694.28px;" width="20" height="12" viewBox="0 0 20 12" fill="none"><rect x="1.1" y="1.1" width="16.9" height="9.3" rx="4.65" fill="#fff" stroke="#555" stroke-width="1.2"/><circle cx="13.6" cy="5.75" r="2.8" fill="#0e8a85"/></svg>
<svg class="r" style="left:141.3px;top:622.8px;" width="18" height="17" viewBox="0 0 18 17" fill="none"><rect x="1.6" y="1.6" width="13" height="12.4" fill="#fff"/><path d="M10 1.1 H1.1 V14.4 H14.1 V6" stroke="#555" stroke-width="1.3"/><path d="M4.2 11.4 L14.4 1.3" stroke="#2f8a80" stroke-width="3.4" stroke-linecap="round"/><path d="M4.2 11.4 L14.4 1.3" stroke="#bff3f0" stroke-width="1.3" stroke-linecap="round"/></svg>
<svg class="r" style="left:141.3px;top:728.22px;" width="18" height="17" viewBox="0 0 18 17" fill="none"><rect x="1.6" y="1.6" width="13" height="12.4" fill="#fff"/><path d="M10 1.1 H1.1 V14.4 H14.1 V6" stroke="#555" stroke-width="1.3"/><path d="M4.2 11.4 L14.4 1.3" stroke="#2f8a80" stroke-width="3.4" stroke-linecap="round"/><path d="M4.2 11.4 L14.4 1.3" stroke="#bff3f0" stroke-width="1.3" stroke-linecap="round"/></svg>
</body></html>
